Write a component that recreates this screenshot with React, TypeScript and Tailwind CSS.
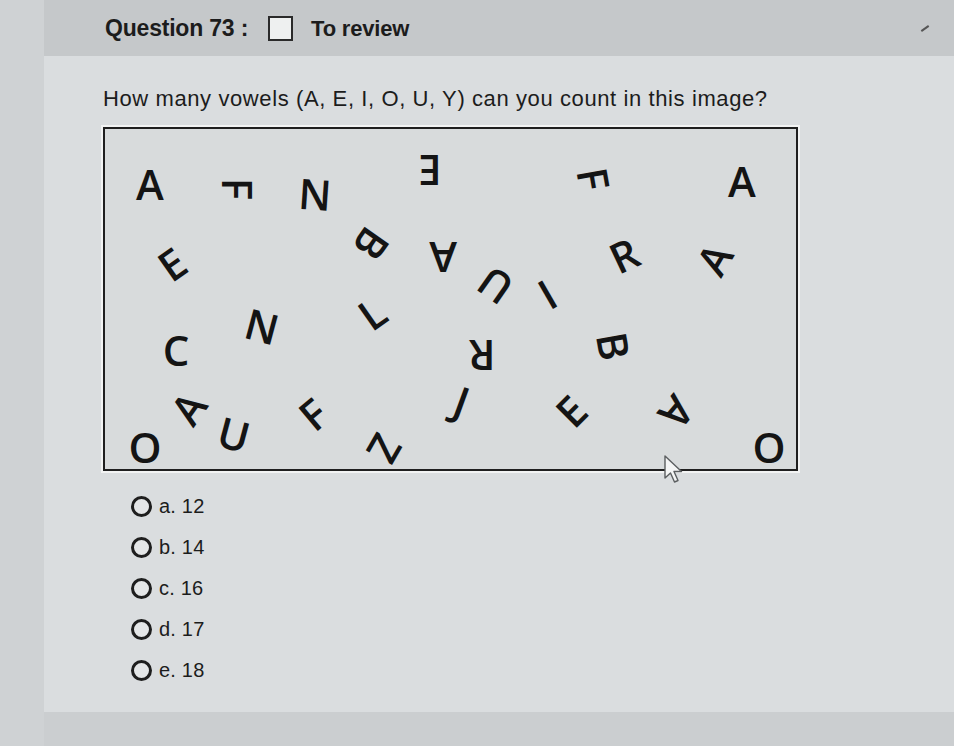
import React from 'react'

interface Glyph { ch: string; cls: string }

// letters scattered in the picture: position + rotation is the content here
const GLYPHS: Glyph[] = [
  { ch: 'A', cls: 'left-[45px] top-[55px]' },
  { ch: 'F', cls: 'left-[133px] top-[60px] rotate-90' },
  { ch: 'N', cls: 'left-[210px] top-[65px] rotate-[4deg]' },
  { ch: 'E', cls: 'left-[325px] top-[42px] rotate-180' },
  { ch: 'F', cls: 'left-[489px] top-[50px] rotate-[80deg]' },
  { ch: 'A', cls: 'left-[637px] top-[52px]' },
  { ch: 'E', cls: 'left-[67px] top-[135px] -rotate-[35deg]' },
  { ch: 'B', cls: 'left-[267px] top-[115px] rotate-[125deg]' },
  { ch: 'A', cls: 'left-[338px] top-[129px] rotate-180' },
  { ch: 'U', cls: 'left-[390px] top-[157px] -rotate-[145deg]' },
  { ch: 'I', cls: 'left-[442px] top-[165px] -rotate-[30deg]' },
  { ch: 'R', cls: 'left-[519px] top-[126px] -rotate-[25deg]' },
  { ch: 'A', cls: 'left-[609px] top-[130px] -rotate-[60deg]' },
  { ch: 'N', cls: 'left-[157px] top-[197px] rotate-[15deg]' },
  { ch: 'L', cls: 'left-[267px] top-[184px] -rotate-[35deg]' },
  { ch: 'C', cls: 'left-[71px] top-[221px]' },
  { ch: 'R', cls: 'left-[377px] top-[227px] rotate-180' },
  { ch: 'B', cls: 'left-[509px] top-[217px] rotate-[80deg]' },
  { ch: 'O', cls: 'left-[40px] top-[318px]' },
  { ch: 'A', cls: 'left-[83px] top-[279px] -rotate-[55deg]' },
  { ch: 'U', cls: 'left-[129px] top-[305px] rotate-[15deg]' },
  { ch: 'F', cls: 'left-[208px] top-[285px] -rotate-[40deg]' },
  { ch: 'Z', cls: 'left-[280px] top-[320px] rotate-[120deg]' },
  { ch: 'J', cls: 'left-[357px] top-[272px] rotate-[20deg]' },
  { ch: 'E', cls: 'left-[466px] top-[282px] -rotate-[45deg]' },
  { ch: 'A', cls: 'left-[572px] top-[284px] rotate-[130deg]' },
  { ch: 'O', cls: 'left-[664px] top-[318px]' },
]

const OPTIONS = ['a. 12', 'b. 14', 'c. 16', 'd. 17', 'e. 18']

export default function App() {
  return (
    <div className="h-[746px] w-full flex flex-col bg-[#cfd2d4] pl-[44px] font-['Liberation_Sans',Arial,sans-serif] text-[#1c1c1c]">
      {/* Header */}
      <header className="h-[56px] shrink-0 flex items-center bg-[#c5c8ca] pl-[61px] pr-6">
        <span className="text-[23px] font-bold tracking-[-0.2px]">Question 73 :</span>
        <span className="ml-[20px] w-[25px] h-[25px] border-2 border-[#2a2a2a] bg-[#eef0f0]" />
        <span className="ml-[18px] text-[22px] font-semibold tracking-[-0.2px]">To review</span>
        <span className="ml-auto mr-[4px] w-[2px] h-[9px] bg-[#555] rotate-[55deg]" />
      </header>

      {/* Body */}
      <main className="flex-1 bg-[#dadddf] pl-[59px] pt-[30px]">
        <p className="text-[22px] leading-[26px] tracking-[0.6px]">
          How many vowels (A, E, I, O, U, Y) can you count in this image?
        </p>

        <div className="relative mt-[15px] w-[695px] h-[344px] border-2 border-[#1f1f1f] bg-[#d8dbdc] outline outline-2 outline-[#f2f3f3]">
          {GLYPHS.map((g, i) => (
            <span
              key={i}
              className={`absolute -translate-x-1/2 -translate-y-1/2 font-['Open_Sans',sans-serif] text-[42px] leading-none font-semibold text-[#141414] ${g.cls}`}
            >
              {g.ch}
            </span>
          ))}
          {/* mouse pointer resting on the frame */}
          <svg className="absolute left-[558px] top-[325px]" width="22" height="30" viewBox="0 0 22 30">
            <path d="M2 2 L2 24 L7.5 19 L11.5 28 L15 26.5 L11 17.5 L18.5 17.5 Z" fill="#f4f5f5" stroke="#5b5e60" strokeWidth="1.4" strokeLinejoin="round" />
          </svg>
        </div>

        <div className="mt-[22px] ml-[28px] flex flex-col gap-[15px]">
          {OPTIONS.map(o => (
            <label key={o} className="h-[26px] flex items-center gap-[7px]">
              <span className="w-[21px] h-[21px] rounded-full border-[3px] border-[#1e1e1e] bg-[#e4e6e7]" />
              <span className="text-[20px] tracking-[0.2px]">{o}</span>
            </label>
          ))}
        </div>
      </main>

      <div className="h-[34px] shrink-0 bg-[#cbced0]" />
    </div>
  )
}
